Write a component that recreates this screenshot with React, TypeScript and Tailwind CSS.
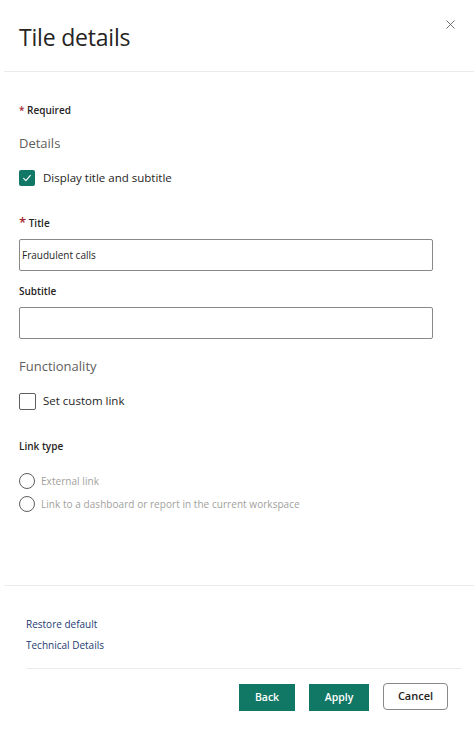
import { X } from "lucide-react";

function CheckMark() {
  return (
    <svg viewBox="0 0 16 16" className="h-3 w-3" aria-hidden="true">
      <path
        d="M3.5 8.5l3 3 6-7"
        fill="none"
        stroke="white"
        strokeWidth="1.5"
        strokeLinecap="round"
        strokeLinejoin="round"
      />
    </svg>
  );
}

function Radio({ label }: { label: string }) {
  return (
    <div className="flex h-5 items-center gap-[6px]">
      <span className="h-[16px] w-[16px] rounded-full border border-[#605e5c]" />
      <span className="text-[10px] tracking-[0.05px] text-[#a19f9d]">{label}</span>
    </div>
  );
}

export default function App() {
  return (
    <div
      className="flex h-[737px] w-[474px] flex-col bg-white pl-1 text-[#252423]"
      style={{ fontFamily: "'Open Sans', 'Noto Sans', sans-serif" }}
    >
      {/* header */}
      <div className="flex h-[72px] shrink-0 items-start justify-between border-b border-[#edebe9] pl-[15px] pr-[16px]">
        <h1 className="mt-[21px] text-[23px] leading-8 tracking-[-0.2px]">Tile details</h1>
        <button className="mt-[17px] text-[#605e5c]" aria-label="Close">
          <X className="h-[15px] w-[15px]" strokeWidth={1.4} />
        </button>
      </div>

      {/* body */}
      <div className="flex flex-1 flex-col pl-[15px] pr-[41px]">
        <div className="mt-[30px] text-[10px] font-semibold leading-4">
          <span className="text-[#a4262c]">*</span> Required
        </div>

        <div className="mt-[15px] text-[13px] leading-5 text-[#605e5c]">Details</div>

        <label className="mt-[15px] flex h-5 items-center gap-[8px]">
          <span className="flex h-[16px] w-[16px] items-center justify-center rounded-[2px] bg-[#117865]">
            <CheckMark />
          </span>
          <span className="text-[11.5px]">Display title and subtitle</span>
        </label>

        <div className="mt-[26px] text-[10px] font-semibold leading-4">
          <span className="text-[13px] text-[#a4262c]">*</span> Title
        </div>
        <input
          defaultValue="Fraudulent calls"
          className="mt-[8px] h-[32px] w-full rounded-[2px] border border-[#8a8886] px-[2px] text-[10px] text-[#252423] outline-none"
        />

        <div className="mt-[12px] text-[10px] font-semibold leading-4">Subtitle</div>
        <input className="mt-[8px] h-[32px] w-full rounded-[2px] border border-[#8a8886] px-[2px] text-[10px] outline-none" />

        <div className="mt-[17px] text-[13px] leading-5 text-[#605e5c]">Functionality</div>

        <label className="mt-[15px] flex h-5 items-center gap-[7px]">
          <span className="h-[17px] w-[17px] rounded-[2px] border border-[#605e5c]" />
          <span className="text-[11.5px]">Set custom link</span>
        </label>

        <div className="mt-[27px] text-[10px] font-semibold leading-4">Link type</div>

        <div className="mt-[17px] flex flex-col gap-[3px]">
          <Radio label="External link" />
          <Radio label="Link to a dashboard or report in the current workspace" />
        </div>
      </div>

      {/* footer */}
      <div className="flex h-[152px] shrink-0 flex-col border-t border-[#edebe9] pl-[22px] pr-[12px]">
        <a className="mt-[30px] text-[10px] leading-4 text-[#243a73]">Restore default</a>
        <a className="mt-[5px] text-[10px] leading-4 text-[#243a73]">Technical Details</a>
        <div className="mt-[15px] border-t border-[#edebe9]" />
        <div className="mt-[15px] flex justify-end gap-[14px] pr-[14px]">
          <button className="h-[27px] w-[56px] bg-[#117865] text-[10.5px] font-semibold text-white">
            Back
          </button>
          <button className="h-[27px] w-[60px] bg-[#117865] text-[10.5px] font-semibold text-white">
            Apply
          </button>
          <button className="-mt-px h-[27px] w-[65px] rounded-[4px] border border-[#8a8886] text-[11px] font-semibold text-[#252423]">
            Cancel
          </button>
        </div>
      </div>
    </div>
  );
}
